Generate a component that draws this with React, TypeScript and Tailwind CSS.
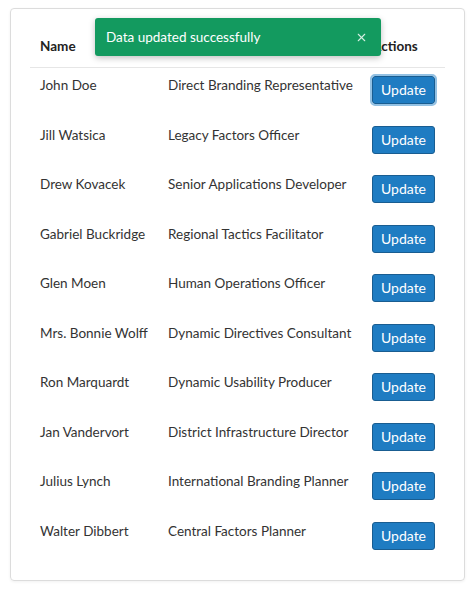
import { X } from "lucide-react";

const people = [
  { name: "John Doe", job: "Direct Branding Representative" },
  { name: "Jill Watsica", job: "Legacy Factors Officer" },
  { name: "Drew Kovacek", job: "Senior Applications Developer" },
  { name: "Gabriel Buckridge", job: "Regional Tactics Facilitator" },
  { name: "Glen Moen", job: "Human Operations Officer" },
  { name: "Mrs. Bonnie Wolff", job: "Dynamic Directives Consultant" },
  { name: "Ron Marquardt", job: "Dynamic Usability Producer" },
  { name: "Jan Vandervort", job: "District Infrastructure Director" },
  { name: "Julius Lynch", job: "International Branding Planner" },
  { name: "Walter Dibbert", job: "Central Factors Planner" },
];

export default function App() {
  return (
    <div
      className="relative w-[474px] h-[597px] bg-white pt-2 px-[10px]"
      style={{ fontFamily: 'Lato, sans-serif' }}
    >
      <div className="w-[455px] h-[573px] border border-[#dcdcdc] rounded-[4px] shadow-[0_1px_3px_rgba(0,0,0,0.06)] px-[19px] pt-[15px]">
        {/* Header */}
        <div className="flex items-center h-[44px] pt-[2px] border-b border-[#e6e6e6] text-[13.5px] font-bold text-[#222] whitespace-nowrap">
          <div className="w-[138px] pl-[10px]">Name</div>
          <div className="flex-1">Job</div>
          <div className="w-[75px] pl-[2px]">Actions</div>
        </div>

        {/* Rows */}
        {people.map((p, i) => (
          <div key={p.name} className="flex items-start h-[49.5px] text-[13.5px] text-[#333] whitespace-nowrap">
            <div className="w-[138px] pl-[10px] pt-[7px] leading-[20px]">{p.name}</div>
            <div className="flex-1 pt-[7px] leading-[20px]">{p.job}</div>
            <div className="w-[73px] pt-[8px]">
              <button
                className={`w-[63px] h-[28px] rounded-[3px] bg-[#1f7cc2] border border-[#195d91] text-white text-[14px] leading-none ${
                  i === 0 ? "outline-2 outline-[#93c1e3]" : ""
                }`}
              >
                Update
              </button>
            </div>
          </div>
        ))}
      </div>

      {/* Toast */}
      <div className="absolute left-[95px] top-[18px] w-[286px] h-[38px] rounded-[3px] bg-[#139a5f] shadow-[0_2px_6px_rgba(0,0,0,0.25)] flex items-center justify-between pl-[11px] pr-[13px]">
        <span className="text-white text-[13.5px]">Data updated successfully</span>
        <X className="w-[13px] h-[13px] text-[#d6efe2]" strokeWidth={2} />
      </div>
    </div>
  );
}
